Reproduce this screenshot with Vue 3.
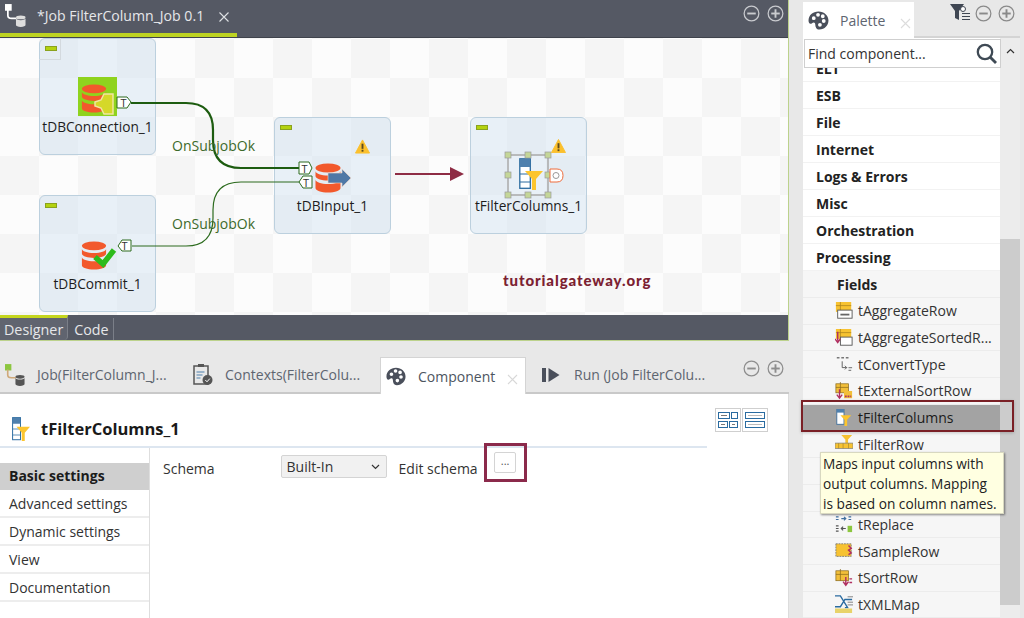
<script setup>
import { ref } from 'vue'

// nodes of the job diagram, page coords minus canvas top
const nodes = [
  { name: 'tDBConnection_1', x: 39, y: 0, w: 117, h: 117, labelY: 88 },
  { name: 'tDBCommit_1', x: 39, y: 157, w: 117, h: 117, labelY: 88 },
  { name: 'tDBInput_1', x: 274, y: 79, w: 117, h: 117, labelY: 88 },
  { name: 'tFilterColumns_1', x: 470, y: 79, w: 117, h: 117, labelY: 88 }
]

const categories = ['ELT', 'ESB', 'File', 'Internet', 'Logs & Errors', 'Misc', 'Orchestration', 'Processing']

const items = [
  { name: 'tAggregateRow', icon: 'i-agg' },
  { name: 'tAggregateSortedR...', icon: 'i-aggs' },
  { name: 'tConvertType', icon: 'i-conv' },
  { name: 'tExternalSortRow', icon: 'i-ext' },
  { name: 'tFilterColumns', icon: 'i-fcol', selected: true },
  { name: 'tFilterRow', icon: 'i-frow' },
  { name: '', icon: '' },
  { name: '', icon: '' },
  { name: 'tReplace', icon: 'i-repl' },
  { name: 'tSampleRow', icon: 'i-samp' },
  { name: 'tSortRow', icon: 'i-sort' },
  { name: 'tXMLMap', icon: 'i-xml' }
]

const sideTabs = ['Basic settings', 'Advanced settings', 'Dynamic settings', 'View', 'Documentation']
const schema = ref('Built-In')
const handles = [[508, 117], [528, 117], [548, 117], [508, 137], [548, 137], [508, 157], [528, 157], [548, 157]]
</script>

<template>
  <div class="app">
    <svg class="defs" aria-hidden="true">
      <defs>
        <symbol id="db" viewBox="0 0 26 30">
          <ellipse cx="13" cy="5" rx="12.5" ry="4.5" fill="#f2592c" />
          <path fill="#f2592c" d="M.5 8v5C.5 15.500 6 17.500 13 17.500s12.500-2 12.500-4.500V8C25.500 10.500 20 12.500 13 12.500S.5 10.500.5 8z" />
          <path fill="#f2592c" d="M.5 16.500v8.500C.5 27.500 6 29.500 13 29.500s12.500-2 12.500-4.500v-8.500C25.500 19 20 21 13 21S.5 19 .5 16.500z" />
        </symbol>
        <symbol id="warn" viewBox="0 0 16 15">
          <path d="M8 .5 15.500 14.500H.5z" fill="#fbc02d" stroke="#fbc02d" stroke-linejoin="round" />
          <rect x="7" y="4.500" width="2" height="5.500" fill="#5a4a20" />
          <rect x="7" y="11" width="2" height="2" fill="#5a4a20" />
        </symbol>
        <symbol id="minus" viewBox="0 0 18 18">
          <circle cx="9" cy="9" r="7.800" fill="none" stroke="currentColor" stroke-width="1.300" />
          <rect x="4.500" y="8" width="9" height="2" fill="currentColor" />
        </symbol>
        <symbol id="plus" viewBox="0 0 18 18">
          <circle cx="9" cy="9" r="7.800" fill="none" stroke="currentColor" stroke-width="1.300" />
          <rect x="4.500" y="8" width="9" height="2" fill="currentColor" />
          <rect x="8" y="4.500" width="2" height="9" fill="currentColor" />
        </symbol>
        <symbol id="paint" viewBox="0 0 22 20">
          <path fill="#4a4f5b" fill-rule="evenodd" d="M11 .5C5 .5.5 4.500.5 10c0 2 .8 3.500 2 3.500 1.500 0 2-1.500 3.500-1.500 2 0 1.500 3 2 4.500.5 2 2 3 4 3 5.500 0 9.500-4.500 9.500-9.500S17 .5 11 .5zM6 9.500a2 2 0 1 1 0-4 2 2 0 0 1 0 4zm4.500-3.500a2 2 0 1 1 0-4 2 2 0 0 1 0 4zm5 1.500a2 2 0 1 1 0-4 2 2 0 0 1 0 4zm1 5a2 2 0 1 1 0-4 2 2 0 0 1 0 4zm-4 4a2 2 0 1 1 0-4 2 2 0 0 1 0 4z" />
        </symbol>
        <symbol id="table-funnel" viewBox="0 0 24 32">
          <rect x=".8" y=".8" width="10.500" height="29.500" fill="#fff" stroke="#2a6ba0" stroke-width="1.300" />
          <rect x="1" y="1" width="10" height="8" fill="#4f80ad" />
          <path d="M1 16h10M1 24h10" stroke="#2a6ba0" />
          <path d="M6 13h18l-7 8v11h-4V21z" fill="#fcc52e" />
        </symbol>
        <symbol id="i-agg" viewBox="0 0 20 20">
          <rect x="1" y="0" width="17" height="11" fill="#f7c231" />
          <path d="M1 4h17M6 0v11" stroke="#a8801c" stroke-width=".8" />
          <rect x="3" y="9" width="16" height="9" fill="#fff" stroke="#555" />
          <path d="M6 14h10" stroke="#666" stroke-width="2" />
        </symbol>
        <symbol id="i-aggs" viewBox="0 0 20 20">
          <rect x="1" y="0" width="17" height="11" fill="#f7c231" />
          <path d="M1 4h17M6 0v11" stroke="#a8801c" stroke-width=".8" />
          <rect x="6" y="9" width="13" height="9" fill="#fff" stroke="#555" />
          <path d="M3 3v10M0 11l3 4 3-4" stroke="#b03060" stroke-width="1.600" fill="none" />
        </symbol>
        <symbol id="i-conv" viewBox="0 0 20 20">
          <path d="M2 3h3M7 3h3M12 3h3" stroke="#777" stroke-width="1.500" />
          <path d="M8 7v7h5M11 12l2 2-2 2" stroke="#555" fill="none" />
          <path d="M15 14h4M15 17h3" stroke="#888" stroke-width="1.300" />
        </symbol>
        <symbol id="i-ext" viewBox="0 0 20 20">
          <rect x="1" y="2" width="14" height="10" fill="#f2bf3a" stroke="#8a6a1c" stroke-width=".8" />
          <path d="M6 0v12M1 6h14" stroke="#8a6a1c" stroke-width=".8" />
          <path d="M5 8v9M2 14l3 4 3-4" stroke="#b03060" stroke-width="1.500" fill="none" />
          <rect x="10" y="10" width="9" height="8" fill="#f2bf3a" />
          <path d="M11 16h7" stroke="#b03060" stroke-dasharray="2 1" stroke-width="2" />
        </symbol>
        <symbol id="i-fcol" viewBox="0 0 20 20">
          <rect x="2" y="0" width="8" height="17" fill="#fff" stroke="#3d6d9a" />
          <rect x="2" y="0" width="8" height="4" fill="#4f80ad" />
          <path d="M6 7h12l-4.500 5v7h-3v-7z" fill="#fcc52e" />
        </symbol>
        <symbol id="i-frow" viewBox="0 0 20 20">
          <path d="M7 0h12l-4.500 5v5h-3V5z" fill="#f7c231" />
          <rect x="0" y="9" width="20" height="6" fill="#f7c231" stroke="#7f7f7f" stroke-width=".8" />
          <path d="M4 9v6M9 9v6M15 9v6" stroke="#a98a2c" stroke-width=".8" />
        </symbol>
        <symbol id="i-repl" viewBox="0 0 20 20">
          <path d="M1 2h3M1 5h3M7 4h5M10 2l2 2-2 2M15 2h3M15 5h3" stroke="#3e6e9f" stroke-width="1.300" fill="none" />
          <path d="M1 12h3M1 15h3M1 18h3M12 15H7M9 13l-2 2 2 2" stroke="#555" stroke-width="1.300" fill="none" />
          <rect x="14" y="12" width="5" height="7" fill="#8cc63f" />
        </symbol>
        <symbol id="i-samp" viewBox="0 0 20 20">
          <rect x="1" y="2" width="17" height="14" fill="#f7c231" stroke="#7d7d7d" stroke-dasharray="2 1" />
          <path d="M15 4l3 3-3 2 3 3-3 2" stroke="#b03060" stroke-width="1.600" fill="none" />
        </symbol>
        <symbol id="i-sort" viewBox="0 0 20 20">
          <rect x="1" y="2" width="14" height="11" fill="#f2bf3a" stroke="#8a6a1c" stroke-width=".8" />
          <path d="M6 0v13M1 6h14" stroke="#8a6a1c" stroke-width=".8" />
          <path d="M12 9v9M9 14l3 4 3-4" stroke="#b03060" stroke-width="1.600" fill="none" />
          <path d="M16 11h3M16 15h3" stroke="#b03060" stroke-width="1.500" />
        </symbol>
        <symbol id="i-xml" viewBox="0 0 20 20">
          <path d="M0 1h6l8 13h-3M0 13h6l5-8h8" stroke="#2a6ba0" stroke-width="1.500" fill="none" />
          <path d="M14 2h6M14 8h6M14 11h6" stroke="#777" />
          <rect x="0" y="15" width="19" height="5" fill="#e8d36a" />
        </symbol>
        <symbol id="i-job" viewBox="0 0 22 24">
          <rect x="0" y="0" width="7" height="7" fill="currentColor" />
          <path d="M3 6v6q0 3 4 3h5" fill="none" stroke="#cfa97a" stroke-width="1.800" />
          <ellipse cx="16.500" cy="14" rx="5" ry="2" fill="#555" />
          <path d="M11.500 15v7c0 1 2 2 5 2s5-1 5-2v-7c0 1-2 2-5 2s-5-1-5-2z" fill="#555" />
        </symbol>
        <symbol id="i-job-top" viewBox="0 0 22 24">
          <rect x="0" y="0" width="7" height="7" fill="#fff" />
          <path d="M3 6v6q0 3 4 3h5" fill="none" stroke="#fff" stroke-width="1.800" />
          <ellipse cx="16.500" cy="14" rx="5" ry="2" fill="#ddd" />
          <path d="M11.500 15v7c0 1 2 2 5 2s5-1 5-2v-7c0 1-2 2-5 2s-5-1-5-2z" fill="#ddd" />
        </symbol>
      </defs>
    </svg>

    <div class="left">
      <section class="editor">
        <div class="editor-tabs">
          <div class="job-tab">
            <svg class="job-icon" width="21" height="23"><use href="#i-job-top" /></svg>
            <span>*Job FilterColumn_Job 0.1</span>
            <svg class="tab-x" width="12" height="12" viewBox="0 0 12 12"><path d="M1.500 1.500l9 9m0-9l-9 9" stroke="#dfe1e4" stroke-width="1.100" /></svg>
          </div>
          <div class="win-btns light">
            <svg width="17" height="17"><use href="#minus" /></svg>
            <svg width="17" height="17"><use href="#plus" /></svg>
          </div>
        </div>

        <div class="canvas">
          <div v-for="n in nodes" :key="n.name" class="node"
            :style="{ left: n.x + 'px', top: n.y + 'px', width: n.w + 'px', height: n.h + 'px' }">
            <span class="node-min"></span>
            <span class="node-label" :style="{ top: n.labelY - 10 + 'px' }">{{ n.name }}</span>
          </div>
          <span class="corner-box"></span>

          <svg class="canvas-art" width="788" height="277" viewBox="0 0 788 277">
            <!-- links -->
            <path d="M131 65H186Q213 65 213 92V102Q213 130 241 130H299" fill="none" stroke="#1d5c10" stroke-width="2.200" />
            <path d="M132 208H186Q213 208 213 180V172Q213 144 241 144H299" fill="none" stroke="#2c6b1e" stroke-width="1.200" />

            <!-- tDBConnection -->
            <rect x="78" y="39" width="39" height="39" fill="#8fd31e" />
            <use href="#db" x="81" y="46" width="26" height="29" />
            <path d="M95 64l6-2 3-6h9v20h-9l-3-6-6-2z" fill="#d5d829" stroke="#f1e6a0" stroke-width="1.500" />
            <path d="M117 59h10l4 5-4 6h-10z" fill="#fff" stroke="#2c6b1e" />
            <text x="120.500" y="69" class="port">T</text>

            <!-- tDBCommit -->
            <use href="#db" x="81" y="203" width="26" height="29" />
            <path d="M95 219l8 7 11-14" fill="none" stroke="#2dbb1b" stroke-width="5.500" />
            <path d="M122 202h9v11h-9l-4-5z" fill="#fff" stroke="#2c6b1e" />
            <text x="121.500" y="212" class="port">T</text>

            <!-- tDBInput -->
            <path d="M299 124h10l3 6-3 6h-10z" fill="#fff" stroke="#2c6b1e" />
            <text x="301.500" y="135" class="port">T</text>
            <path d="M303 138h9v12h-9l-4-6z" fill="#fff" stroke="#2c6b1e" />
            <text x="303" y="149" class="port">T</text>
            <use href="#db" x="315" y="125" width="26" height="30" />
            <path d="M328 135h14v-4l9 9-9 9v-4h-14z" fill="#4f78a6" stroke="#f3d9c8" stroke-width=".6" />
            <use href="#warn" x="355" y="101" width="15" height="15" />

            <!-- arrow between the components -->
            <path d="M395 136H452" stroke="#8e2c44" stroke-width="2.200" />
            <path d="M450 129l14 7-14 7z" fill="#8e2c44" />

            <!-- tFilterColumns selected -->
            <rect x="508" y="117" width="40" height="40" fill="none" stroke="#a9a9a9" stroke-width="1.500" />
            <use href="#table-funnel" x="519" y="120" width="24" height="32" />
            <rect v-for="h in handles" :key="h[0] + '-' + h[1]" :x="h[0] - 3" :y="h[1] - 3" width="6" height="6" fill="#c4d698" stroke="#9a9a9a" stroke-width=".7" />
            <path d="M550 131h7q6 0 6 6.500t-6 6.500h-7z" fill="#fff" stroke="#ee6c3c" stroke-width="1" />
            <circle cx="556" cy="137.500" r="3" fill="#fff" stroke="#999" />
            <use href="#warn" x="551" y="101" width="15" height="14" />
          </svg>

          <span class="link-label" style="left: 172px; top: 98px">OnSubjobOk</span>
          <span class="link-label" style="left: 172px; top: 176px">OnSubjobOk</span>
          <span class="watermark">tutorialgateway.org</span>
        </div>

        <div class="editor-foot">
          <span class="foot-tab active">Designer</span>
          <span class="foot-tab">Code</span>
        </div>
      </section>

      <section class="views">
        <div class="view-tabs">
          <div class="view-tab first" style="width: 188px">
            <svg width="20" height="22"><use href="#i-job" style="color: #8cc63f" /></svg>
            <span>Job(FilterColumn_J...</span>
          </div>
          <div class="view-tab first" style="width: 192px">
            <svg width="20" height="22" viewBox="0 0 20 22">
              <rect x="1" y="2" width="14" height="18" fill="none" stroke="#555" stroke-width="1.500" />
              <rect x="5" y="0" width="6" height="3" fill="#555" />
              <path d="M3.500 8h8M3.500 11h6M3.500 14h4" stroke="#4f80ad" />
              <circle cx="14.500" cy="16" r="5" fill="#555" />
              <path d="M12.300 16l1.700 1.800 2.800-3.200" stroke="#fff" fill="none" />
            </svg>
            <span>Contexts(FilterColu...</span>
          </div>
          <div class="view-tab active">
            <svg width="20" height="19"><use href="#paint" /></svg>
            <span>Component</span>
            <svg class="view-x" width="11" height="11" viewBox="0 0 11 11"><path d="M1 1l9 9m0-9l-9 9" stroke="#d8d8d8" stroke-width="1.100" /></svg>
          </div>
          <div class="view-tab run">
            <svg width="18" height="16" viewBox="0 0 18 16"><rect x="0" y="1" width="4" height="14" fill="#4a4f5b" /><path d="M6.500 1l11 7-11 7z" fill="#4a4f5b" /></svg>
            <span>Run (Job FilterColu...</span>
          </div>
          <div class="win-btns dark">
            <svg width="17" height="17"><use href="#minus" /></svg>
            <svg width="17" height="17"><use href="#plus" /></svg>
          </div>
        </div>

        <div class="view-body">
          <div class="comp-head">
            <div class="comp-title">
              <svg width="18" height="24"><use href="#table-funnel" /></svg>
              <strong>tFilterColumns_1</strong>
            </div>
            <div class="layout-btns">
              <span class="layout-btn">
                <svg width="20" height="16" viewBox="0 0 20 16">
                  <rect x=".5" y=".5" width="11" height="6" fill="none" stroke="#2a6ba0" /><rect x="13.500" y=".5" width="6" height="6" fill="none" stroke="#2a6ba0" />
                  <rect x=".5" y="9.500" width="9" height="6" fill="none" stroke="#2a6ba0" /><rect x="11.500" y="9.500" width="8" height="6" fill="none" stroke="#2a6ba0" />
                  <path d="M3 3.500h6M3 12.500h4M14 12.500h3" stroke="#777" />
                </svg>
              </span>
              <span class="layout-btn">
                <svg width="20" height="16" viewBox="0 0 20 16">
                  <rect x=".5" y=".5" width="19" height="6" fill="none" stroke="#2a6ba0" /><rect x=".5" y="9.500" width="19" height="6" fill="none" stroke="#2a6ba0" />
                  <path d="M3 3.500h14M3 12.500h14" stroke="#bbb" />
                </svg>
              </span>
            </div>
          </div>

          <div class="comp-main">
            <ul class="side-tabs">
              <li v-for="(t, i) in sideTabs" :key="t" :class="{ current: i === 0 }">{{ t }}</li>
            </ul>
            <div class="settings">
              <span class="field-label">Schema</span>
              <div class="select-wrap">
                <select v-model="schema" class="schema-select">
                  <option>Built-In</option>
                </select>
                <svg class="chev" width="9" height="6" viewBox="0 0 9 6"><path d="M1 1l3.500 3.500L8 1" fill="none" stroke="#333" stroke-width="1.200" /></svg>
              </div>
              <span class="field-label edit">Edit schema</span>
              <span class="mark-box"><button class="dots">...</button></span>
            </div>
          </div>
        </div>
      </section>
    </div>

    <aside class="right">
      <div class="palette-head">
        <div class="palette-tab">
          <svg width="21" height="19"><use href="#paint" /></svg>
          <span>Palette</span>
          <svg class="view-x" width="11" height="11" viewBox="0 0 11 11"><path d="M1 1l9 9m0-9l-9 9" stroke="#dcdcdc" stroke-width="1.100" /></svg>
        </div>
        <div class="palette-tools">
          <svg class="tool-filter" width="21" height="17" viewBox="0 0 21 17">
            <path d="M0 0h14l-5 7v9l-4-2V7z" fill="#3f4652" />
            <circle cx="13" cy="5" r="2.500" fill="#fff" stroke="#3f4652" />
            <path d="M12 9.500h8M12 12.500h8M12 15.500h8" stroke="#3f4652" />
          </svg>
          <svg class="tool-round" width="17" height="17"><use href="#minus" /></svg>
          <svg class="tool-round" width="17" height="17"><use href="#plus" /></svg>
        </div>
      </div>

      <div class="palette-body">
        <div class="palette-col">
          <div class="search">
            <span>Find component...</span>
            <svg width="21" height="21" viewBox="0 0 21 21"><circle cx="9" cy="9" r="7.200" fill="none" stroke="#3f4a55" stroke-width="2.300" /><path d="M14 14l6 6" stroke="#3f4a55" stroke-width="2.800" /></svg>
          </div>
          <div class="tree">
            <div class="tree-inner">
              <div v-for="c in categories" :key="c" class="row cat">{{ c }}</div>
              <div class="row sub">Fields</div>
              <div v-for="(it, i) in items" :key="i" class="row item" :class="{ selected: it.selected }">
                <svg v-if="it.icon" width="18" height="18"><use :href="'#' + it.icon" /></svg>
                <span>{{ it.name }}</span>
              </div>
            </div>
          </div>
        </div>
        <div class="scrollbar">
          <svg class="up" width="9" height="6" viewBox="0 0 9 6"><path d="M1 5l3.500-3.500L8 5" fill="none" stroke="#333" stroke-width="1.200" /></svg>
          <div class="thumb"></div>
        </div>
      </div>

      <div class="row-mark"></div>
      <div class="tooltip">Maps input columns with<br />output columns. Mapping<br />is based on column names.</div>
    </aside>
  </div>
</template>

<style>
html, body {
  margin: 0;
  background: #e8e8e8;
}
</style>

<style scoped>
.app {
  position: relative;
  display: flex;
  width: 1024px;
  height: 618px;
  overflow: hidden;
  background: #e8e8e8;
  font-family: "Open Sans", "Noto Sans", sans-serif;
  font-size: 13.700px;
  color: #222;
}
.defs {
  position: absolute;
  width: 0;
  height: 0;
}

/* left part: job editor + views */
.left {
  display: flex;
  flex-direction: column;
  width: 789px;
  flex: none;
}
.editor {
  display: flex;
  flex-direction: column;
  height: 341px;
  box-sizing: border-box;
  border-right: 1px solid #bcd28c;
  border-bottom: 1px solid #bcd28c;
}
.editor-tabs {
  display: flex;
  justify-content: space-between;
  height: 38px;
  flex: none;
  background: #555964;
  border-bottom: 1px solid #3f434c;
  box-sizing: border-box;
}
.job-tab {
  display: flex;
  align-items: center;
  width: 237px;
  height: 37px;
  box-sizing: border-box;
  padding: 0 0 3px 5px;
  border-bottom: 4px solid #bdd321;
  color: #e6e7ea;
  font-size: 14.100px;
}
.job-icon {
  margin-right: 11px;
}
.tab-x {
  margin-left: 14px;
  margin-top: 3px;
}
.win-btns {
  display: flex;
  gap: 7px;
  padding: 5px 4px 0 0;
}
.win-btns.light {
  color: #c9cbcf;
}
.win-btns.dark {
  color: #8d8d8d;
  margin-left: auto;
  padding: 3px 5px 0 0;
}

.canvas {
  position: relative;
  flex: 1;
  overflow: hidden;
  background: repeating-conic-gradient(#fcfcfc 0 25%, #f5f5f5 0 50%) 0 -38px / 78px 78px;
}
.node {
  position: absolute;
  box-sizing: border-box;
  border: 1px solid #bcd0de;
  border-radius: 6px;
  background: rgba(205, 224, 240, 0.42);
}
.node-min {
  position: absolute;
  left: 5px;
  top: 7px;
  width: 12px;
  height: 5px;
  background: #b4d20f;
  border: 1px solid #8aa21e;
  box-sizing: border-box;
}
.node-label {
  position: absolute;
  left: -6px;
  right: -6px;
  text-align: center;
  color: #1d1d1d;
  white-space: nowrap;
  z-index: 3;
}
.corner-box {
  position: absolute;
  left: 39px;
  top: 0;
  width: 22px;
  height: 22px;
  border: 1px solid #d3d9de;
  border-width: 0 1px 1px 0;
  box-sizing: border-box;
}
.canvas-art {
  position: absolute;
  left: 0;
  top: 0;
}
.port {
  font-size: 11px;
  fill: #333;
}
.link-label {
  position: absolute;
  color: #3d6a2a;
  font-size: 14px;
  white-space: nowrap;
}
.watermark {
  position: absolute;
  left: 503px;
  top: 233px;
  font-family: Lato, sans-serif;
  font-weight: 900;
  font-size: 15px;
  letter-spacing: 0.9px;
  color: #7b2131;
}

.editor-foot {
  display: flex;
  height: 25px;
  flex: none;
  background: #555964;
  border-top: 3px solid #555964;
  box-sizing: border-box;
}
.foot-tab {
  display: flex;
  align-items: center;
  padding: 0 4px 0 6px;
  border-right: 1px solid #7b7f88;
  color: #e6e7ea;
  font-size: 14.300px;
}
.foot-tab.active {
  margin-top: -3px;
  padding: 0 4px;
  border-top: 3px solid #c5d61d;
  background: #60646f;
  border-bottom-right-radius: 4px;
}

/* views panel under the editor */
.views {
  display: flex;
  flex-direction: column;
  flex: 1;
  padding-top: 16px;
  min-height: 0;
}
.view-tabs {
  display: flex;
  height: 37px;
  flex: none;
  box-sizing: border-box;
  border-bottom: 2px solid #c9c9c9;
}
.view-tab {
  display: flex;
  align-items: center;
  gap: 15px;
  padding-left: 5px;
  box-sizing: border-box;
  color: #5e6570;
  font-size: 14px;
  white-space: nowrap;
}
.view-tab.first {
  gap: 12px;
}
.view-tab.active {
  position: relative;
  width: 146px;
  height: 37px;
  gap: 12px;
  color: #4d5560;
  background: #fff;
  border: 1px solid #d4d4d4;
  border-bottom: 0;
}
.view-tab.run {
  padding-left: 16px;
  gap: 14px;
}
.view-x {
  margin-top: 6px;
  flex: none;
}
.view-body {
  flex: 1;
  background: #fff;
  border-right: 1px solid #dcdcdc;
  display: flex;
  flex-direction: column;
  min-height: 0;
}
.comp-head {
  display: flex;
  justify-content: space-between;
  height: 54px;
  width: 707px;
  flex: none;
  box-sizing: border-box;
  border-bottom: 2px solid #dde6f0;
}
.comp-title {
  display: flex;
  align-items: center;
  gap: 11px;
  padding: 17px 0 0 12px;
  font-size: 16.500px;
}
.comp-title strong {
  font-weight: 700;
  color: #1a1a1a;
}
.layout-btns {
  display: flex;
  gap: 1px;
  height: 24px;
  margin-top: 14px;
  margin-right: -61px;
}
.layout-btn {
  display: flex;
  align-items: center;
  justify-content: center;
  width: 26px;
  height: 24px;
  box-sizing: border-box;
  border: 1px solid #cfcfcf;
  background: #fff;
}
.comp-main {
  display: flex;
  flex: 1;
  min-height: 0;
}
.side-tabs {
  list-style: none;
  margin: 0;
  padding: 15px 0 0;
  width: 150px;
  flex: none;
  box-sizing: border-box;
  border-right: 1px solid #dedede;
  font-size: 14px;
  color: #333;
}
.side-tabs li {
  height: 28px;
  line-height: 27px;
  padding-left: 9px;
  box-sizing: border-box;
  border-bottom: 2px solid #ededed;
}
.side-tabs li.current {
  height: 27px;
  line-height: 26px;
  background: #cfcfcf;
  border-bottom: 0;
  font-weight: 700;
  color: #1b1b1b;
}
.settings {
  display: flex;
  align-items: flex-start;
  padding: 8px 0 0 13px;
}
.field-label {
  color: #333;
  font-size: 14px;
  line-height: 26px;
}
.edit {
  margin-left: 12px;
}
.select-wrap {
  position: relative;
  margin-left: 66px;
  margin-top: -1px;
  width: 106px;
  height: 23px;
}
.schema-select {
  appearance: none;
  width: 100%;
  height: 100%;
  box-sizing: border-box;
  border: 1px solid #d4d4d4;
  border-radius: 2px;
  background: #f1f1f1;
  padding: 0 0 1px 5px;
  font: inherit;
  font-size: 14px;
  color: #333;
}
.chev {
  position: absolute;
  right: 7px;
  top: 9px;
}
.mark-box {
  display: flex;
  align-items: center;
  justify-content: center;
  width: 43px;
  height: 39px;
  margin: -13px 0 0 6px;
  box-sizing: border-box;
  border: 3px solid #8b2a4b;
}
.dots {
  width: 22px;
  height: 21px;
  padding: 0 0 6px;
  border: 1px solid #d4d4d4;
  border-radius: 2px;
  background: #fff;
  font-size: 11px;
  color: #555;
  font-family: inherit;
}

/* palette */
.right {
  flex: 1;
  padding-left: 14px;
  display: flex;
  flex-direction: column;
  min-width: 0;
}
.palette-head {
  display: flex;
  height: 38px;
  flex: none;
  width: 217px;
  box-sizing: border-box;
  border-bottom: 2px solid #d4d4d4;
}
.palette-tab {
  display: flex;
  align-items: center;
  gap: 11px;
  width: 111px;
  height: 36px;
  margin-top: 2px;
  padding-left: 5px;
  box-sizing: border-box;
  background: #fff;
  color: #5e6570;
  font-size: 14px;
}
.palette-tab .view-x {
  margin-left: 4px;
}
.palette-tools {
  display: flex;
  gap: 6px;
  padding: 4px 0 0 36px;
  color: #8a8a8a;
}
.tool-filter {
  margin-right: -2px;
}
.tool-round {
  margin-top: 1px;
}
.palette-body {
  display: flex;
  flex: 1;
  min-height: 0;
  width: 217px;
}
.palette-col {
  display: flex;
  flex-direction: column;
  width: 197px;
  flex: none;
  background: #fff;
}
.search {
  display: flex;
  align-items: center;
  justify-content: space-between;
  height: 29px;
  flex: none;
  box-sizing: border-box;
  margin: 1px -1px 0 1px;
  padding: 0 3px 0 3px;
  border: 1px solid #cfcfcf;
  background: #fff;
  font-size: 14px;
  color: #333;
  position: relative;
  z-index: 1;
}
.tree {
  flex: 1;
  overflow: hidden;
  min-height: 0;
}
.tree-inner {
  margin-top: -13px;
}
.row {
  display: flex;
  align-items: center;
  height: 27px;
  box-sizing: border-box;
  border-bottom: 1px solid #f2f2f2;
}
.cat {
  padding-left: 13px;
  font-weight: 700;
  font-size: 14px;
  color: #222;
}
.sub {
  padding-left: 34px;
  font-weight: 700;
  font-size: 14px;
  background: #f6f6f6;
  border-bottom-color: #ececec;
}
.item {
  height: 26.700px;
  gap: 5px;
  padding-left: 32px;
  background: #f6f6f6;
  border-bottom-color: #ececec;
  color: #333;
  font-size: 14px;
  white-space: nowrap;
}
.item.selected {
  background: #a3a3a3;
  color: #1b1b1b;
}
.scrollbar {
  width: 20px;
  flex: none;
  background: #ececec;
  display: flex;
  flex-direction: column;
  align-items: center;
}
.up {
  margin-top: 10px;
}
.thumb {
  width: 100%;
  height: 366px;
  margin-top: 185px;
  background: #cccccc;
}
.row-mark {
  position: absolute;
  left: 801px;
  top: 400px;
  width: 213px;
  height: 32px;
  box-sizing: border-box;
  border: 2px solid #7a2026;
  box-shadow: 0 1px 3px rgba(0, 0, 0, 0.2);
}
.tooltip {
  position: absolute;
  left: 820px;
  top: 452px;
  width: 184px;
  height: 62px;
  box-sizing: border-box;
  padding: 1px 2px;
  background: #ffffe1;
  border: 1px solid #d8d8c0;
  box-shadow: 1px 1px 2px rgba(0, 0, 0, 0.45);
  font-size: 13.700px;
  line-height: 20px;
  color: #222;
  white-space: nowrap;
}
</style>
